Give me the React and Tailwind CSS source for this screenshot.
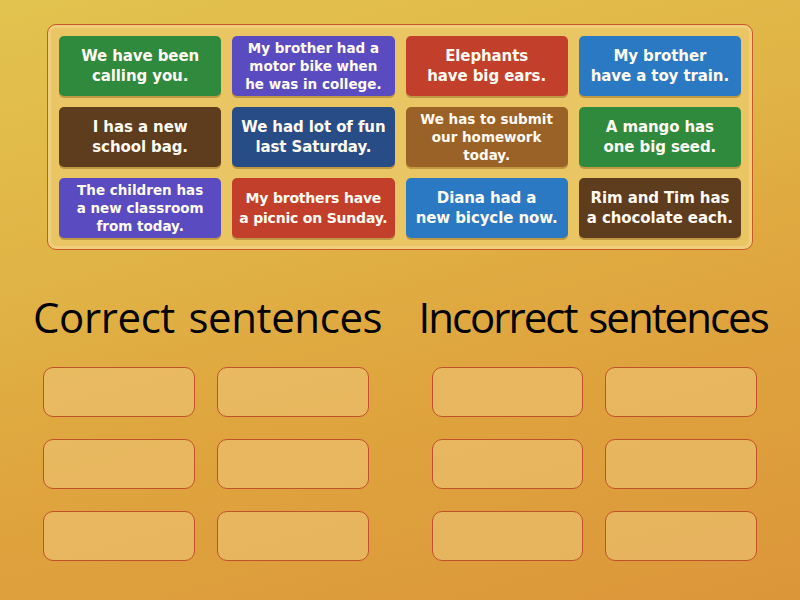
import React from "react";

const cards = [
  { l: ["We have been", "calling you."], c: "bg-[#2f8a3e]" },
  { l: ["My brother had a", "motor bike when", "he was in college."], c: "bg-[#5a4cc0]" },
  { l: ["Elephants", "have big ears."], c: "bg-[#c2402b]" },
  { l: ["My brother", "have a toy train."], c: "bg-[#2a79c2]" },
  { l: ["I has a new", "school bag."], c: "bg-[#5e3c1e]" },
  { l: ["We had lot of fun", "last Saturday."], c: "bg-[#284d86]" },
  { l: ["We has to submit", "our homework", "today."], c: "bg-[#9b6228]" },
  { l: ["A mango has", "one big seed."], c: "bg-[#2f8a3e]" },
  { l: ["The children has", "a new classroom", "from today."], c: "bg-[#5a4cc0]" },
  { l: ["My brothers have", "a picnic on Sunday."], c: "bg-[#c2402b]", small: true },
  { l: ["Diana had a", "new bicycle now."], c: "bg-[#2a79c2]" },
  { l: ["Rim and Tim has", "a chocolate each."], c: "bg-[#5e3c1e]" },
];

function Slot() {
  return (
    <div className="h-[50px] rounded-[10px] border-[1.5px] border-[#c0512a] bg-[#efc476]/60" />
  );
}

function Group({ title, shift }) {
  return (
    <div className="flex flex-col">
      <div
        className={`${shift} whitespace-nowrap text-[42px] leading-[48px] font-medium text-black`}
        style={{ fontFamily: "'Open Sans', sans-serif" }}
      >
        {title}
      </div>
      <div className="mt-[26px] grid grid-cols-2 gap-x-[22px] gap-y-[22px]">
        <Slot />
        <Slot />
        <Slot />
        <Slot />
        <Slot />
        <Slot />
      </div>
    </div>
  );
}

export default function App() {
  return (
    <div
      className="w-[800px] h-[600px] overflow-hidden bg-[linear-gradient(165deg,#e3c34f_0%,#e0b446_35%,#dfa53e_60%,#dc963a_100%)]"
      style={{ fontFamily: "'DejaVu Sans', sans-serif" }}
    >
      <div className="pt-[24px] px-[47px]">
        <div className="rounded-[9px] border-[1.5px] border-[#c9592a] bg-[#e9c564] p-[11px] shadow-[inset_0_0_0_3px_#efcf7c]">
          <div className="grid grid-cols-4 gap-[11px]">
            {cards.map((card, i) => (
              <div
                key={i}
                className={`${card.c} h-[60px] rounded-[5px] flex flex-col items-center justify-center text-[#fffbf2] font-bold text-center shadow-[0_2px_0_rgba(120,70,10,0.35)] ${
                  card.l.length === 3
                    ? "text-[13.5px] leading-[18px]"
                    : card.small
                    ? "text-[14px] leading-[20px] tracking-[-0.2px]"
                    : "text-[15px] leading-[20px] tracking-[-0.1px]"
                }`}
              >
                {card.l.map((l, j) => (
                  <div key={j} className="whitespace-nowrap">{l}</div>
                ))}
              </div>
            ))}
          </div>
        </div>
      </div>
      <div className="mt-[43px] grid grid-cols-2 px-[43px] gap-x-[63px]">
        <Group title="Correct sentences" shift="-ml-[10px] tracking-[-0.4px] [word-spacing:3px]" />
        <Group title="Incorrect sentences" shift="-ml-[13px] tracking-[-2px] [word-spacing:3px]" />
      </div>
    </div>
  );
}
